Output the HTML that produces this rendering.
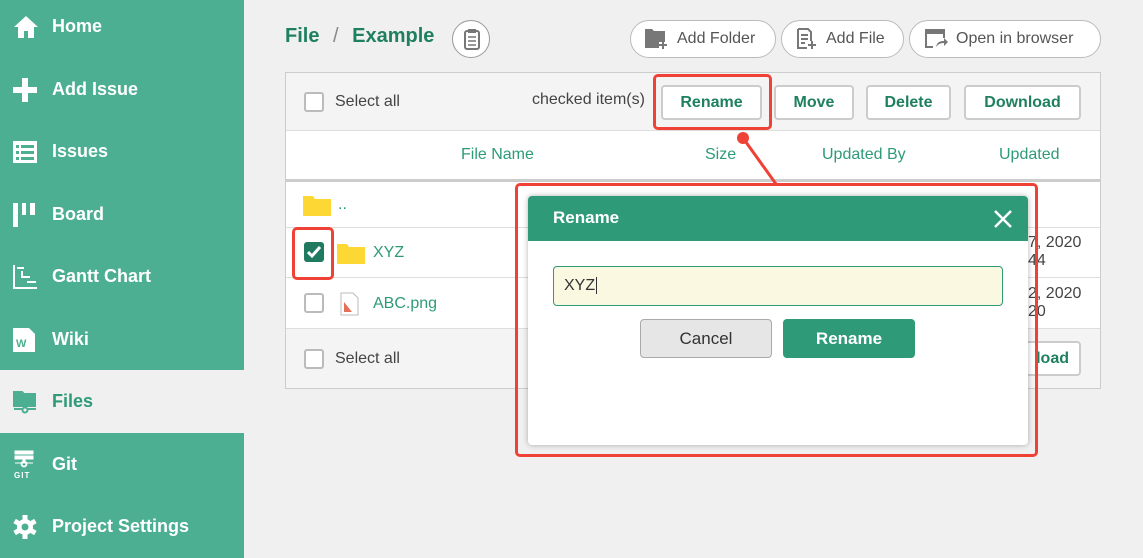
<!DOCTYPE html>
<html><head><meta charset="utf-8"><style>
*{box-sizing:border-box;margin:0;padding:0}
body{width:1143px;height:558px;overflow:hidden;background:#f0f0f0;font-family:"Liberation Sans",sans-serif;position:relative}
.side{position:absolute;left:0;top:0;width:244px;height:558px;background:#4caf91}
.it{position:absolute;left:0;width:244px;height:63px;color:#fff;font-weight:bold;font-size:18px;display:flex;align-items:center}
.it svg{position:absolute;left:13px}
.it span{position:absolute;left:52px}
.it.act{background:#f0f0f0;color:#2e9a78}
.abs{position:absolute}
.pill{position:absolute;top:20px;height:38px;border:1px solid #bbb;border-radius:19px;background:#fff;color:#555;font-size:16px;display:flex;align-items:center;padding-left:14px}
.btn{position:absolute;top:85px;height:35px;border:2px solid #ccc;border-radius:4px;background:#fff;color:#1f8060;font-weight:bold;font-size:16px;display:flex;align-items:center;justify-content:center}
.cb{position:absolute;width:20px;height:20px;border:2px solid #bbb;border-radius:3px;background:#fff}
.g{color:#2e9a78}
.red{position:absolute;border:3px solid #ef4136;border-radius:5px}
</style></head><body>
<div class="side">
<div class="it" style="top:-5px"><svg width="26" height="24" viewBox="0 0 26 24"><path d="M13 1L1 12h4v11h6v-7h4v7h6V12h4z" fill="#fff"/></svg><span>Home</span></div>
<div class="it" style="top:58px"><svg width="24" height="24" viewBox="0 0 24 24"><path d="M9 0h6v9h9v6h-9v9H9v-9H0V9h9z" fill="#fff"/></svg><span>Add Issue</span></div>
<div class="it" style="top:120px"><svg width="24" height="22" viewBox="0 0 24 22"><rect width="24" height="22" fill="#fff"/><path d="M3 4h3v3H3zM8 4h13v3H8zM3 10h3v3H3zM8 10h13v3H8zM3 16h3v3H3zM8 16h13v3H8z" fill="#4caf91"/></svg><span>Issues</span></div>
<div class="it" style="top:183px"><svg width="24" height="24" viewBox="0 0 24 24"><path d="M0 0h5v24H0zM9 0h4v12H9zM17 0h5v12h-5z" fill="#fff"/></svg><span>Board</span></div>
<div class="it" style="top:245px"><svg width="24" height="24" viewBox="0 0 24 24"><path d="M0 0h2v22h22v2H0zM4 2h7v2H4zM8 11h9v2H8zM14 16h9v2h-9zM8 6h2v7H8z" fill="#fff"/></svg><span>Gantt Chart</span></div>
<div class="it" style="top:308px"><svg width="22" height="24" viewBox="0 0 22 24"><path d="M0 0h16l6 6v18H0z" fill="#fff"/><text x="3" y="19" font-size="11" font-weight="bold" fill="#4caf91" font-family="Liberation Sans">W</text></svg><span>Wiki</span></div>
<div class="it act" style="top:370px"><svg width="24" height="24" viewBox="0 0 24 24"><path d="M1 2h8l2 2h11v12H1z M11 16h2v3h-2zM1 19h8M15 19h8" fill="#4caf91" stroke="#4caf91" stroke-width="2"/><circle cx="12" cy="20" r="2.5" fill="#f0f0f0" stroke="#4caf91" stroke-width="2"/></svg><span>Files</span></div>
<div class="it" style="top:433px"><svg width="24" height="30" viewBox="0 0 24 30" style="top:17px"><path d="M2 1h18v3H2zM2 6h18v3H2zM10 9h2v4h-2zM2 13h7M13 13h7" fill="#fff" stroke="#fff" stroke-width="1"/><circle cx="11" cy="14" r="2.5" fill="none" stroke="#fff" stroke-width="1.8"/><text x="1" y="28" font-size="8" fill="#fff" font-family="Liberation Sans" letter-spacing="1">GIT</text></svg><span>Git</span></div>
<div class="it" style="top:495px"><svg width="24" height="24" viewBox="0 0 24 24"><circle cx="12" cy="12" r="8" fill="#fff"/><g fill="#fff"><rect x="9.5" y="0" width="5" height="24"/><rect x="9.5" y="0" width="5" height="24" transform="rotate(60 12 12)"/><rect x="9.5" y="0" width="5" height="24" transform="rotate(120 12 12)"/></g><circle cx="12" cy="12" r="3.5" fill="#4caf91"/></svg><span>Project Settings</span></div>
</div>

<div class="abs" style="left:285px;top:25px;font-size:20px;font-weight:bold;color:#1f8060">File <span style="color:#888;font-weight:normal;margin:0 8px">/</span> Example</div>
<div class="abs" style="left:452px;top:20px;width:38px;height:38px;border:1px solid #999;border-radius:50%;background:#fff"><svg width="38" height="38" viewBox="0 0 38 38"><rect x="12" y="10" width="14" height="18" rx="2" fill="none" stroke="#777" stroke-width="2"/><rect x="15" y="8" width="8" height="4" fill="#777"/><path d="M15 16h8M15 20h8M15 24h8" stroke="#777" stroke-width="1.5"/></svg></div>
<div class="pill" style="left:630px;width:146px"><svg width="24" height="22" viewBox="0 0 24 22" style="margin-right:8px"><path d="M0 1h7l2 2h11v11h-6v6H0z" fill="#777"/><path d="M18 13v8M14 17h8" stroke="#777" stroke-width="2"/></svg>Add Folder</div>
<div class="pill" style="left:781px;width:123px"><svg width="22" height="22" viewBox="0 0 22 22" style="margin-right:8px"><path d="M2 1h10l3 3v9M11 20H2V1" fill="none" stroke="#777" stroke-width="2"/><path d="M5 7h7M5 11h7M5 15h4M16 13v8M12 17h8" stroke="#777" stroke-width="2"/></svg>Add File</div>
<div class="pill" style="left:909px;width:192px"><svg width="24" height="22" viewBox="0 0 24 22" style="margin-right:8px"><path d="M9 19H2V2h18v8" fill="none" stroke="#777" stroke-width="2"/><path d="M2 2h18v4H2z" fill="#777"/><path d="M12 19c1-5 4-6 8-6v-3l4 4-4 4v-3c-3 0-6 1-8 4z" fill="#777"/></svg>Open in browser</div>

<div class="abs" style="left:285px;top:72px;width:816px;height:317px;border:1px solid #ccc;background:#fff">
 <div class="abs" style="left:0;top:0;width:814px;height:58px;background:#f4f4f4;border-bottom:1px solid #ddd"></div>
 <div class="abs" style="left:0;top:106px;width:814px;height:3px;background:#ccc"></div>
 <div class="abs" style="left:0;top:154px;width:814px;height:1px;background:#ddd"></div>
 <div class="abs" style="left:0;top:204px;width:814px;height:1px;background:#ddd"></div>
 <div class="abs" style="left:0;top:255px;width:814px;height:60px;background:#f4f4f4;border-top:1px solid #ddd"></div>
</div>
<div class="cb" style="left:304px;top:92px"></div>
<div class="abs" style="left:335px;top:93px;font-size:16px;color:#444">Select all</div>
<div class="abs" style="left:532px;top:91px;font-size:16px;color:#444">checked item(s)</div>
<div class="btn" style="left:661px;width:101px">Rename</div>
<div class="btn" style="left:774px;width:80px">Move</div>
<div class="btn" style="left:866px;width:85px">Delete</div>
<div class="btn" style="left:964px;width:117px">Download</div>
<div class="red" style="left:653px;top:74px;width:119px;height:56px"></div>
<div class="abs g" style="left:461px;top:146px;font-size:16px">File Name</div>
<div class="abs g" style="left:705px;top:146px;font-size:16px">Size</div>
<div class="abs g" style="left:822px;top:146px;font-size:16px">Updated By</div>
<div class="abs g" style="left:999px;top:146px;font-size:16px">Updated</div>
<svg class="abs" style="left:303px;top:194px" width="28" height="22"><path d="M0 2h10l2 3h16v17H0z" fill="#fdd835"/></svg>
<div class="abs g" style="left:338px;top:196px;font-size:16px">..</div>
<div class="abs" style="left:304px;top:242px;width:20px;height:20px;background:#1f7a60;border-radius:3px"><svg width="20" height="20"><path d="M4 10l4 4 8-9" fill="none" stroke="#fff" stroke-width="3"/></svg></div>
<div class="red" style="left:292px;top:227px;width:42px;height:53px"></div>
<svg class="abs" style="left:337px;top:243px" width="28" height="21"><path d="M0 1h10l2 3h16v17H0z" fill="#fdd835"/></svg>
<div class="abs g" style="left:373px;top:244px;font-size:16px">XYZ</div>
<div class="cb" style="left:304px;top:293px"></div>
<svg class="abs" style="left:340px;top:292px" width="20" height="24"><path d="M1 1h12l5 5v17H1z" fill="#fff" stroke="#bbb"/><path d="M4 10l8 10H4z" fill="#e57058"/></svg>
<div class="abs g" style="left:373px;top:295px;font-size:16px">ABC.png</div>
<div class="abs" style="left:1028px;top:234px;font-size:16px;color:#444">7, 2020<br>44</div>
<div class="abs" style="left:1028px;top:285px;font-size:16px;color:#444">2, 2020<br>20</div>
<div class="cb" style="left:304px;top:349px"></div>
<div class="abs" style="left:335px;top:350px;font-size:16px;color:#444">Select all</div>
<div class="btn" style="left:1000px;top:341px;width:81px;justify-content:flex-end;padding-right:10px">load</div>

<svg class="abs" style="left:735px;top:130px" width="50" height="60"><circle cx="8" cy="8" r="6" fill="#ef4136"/><path d="M8 8L41 54" stroke="#ef4136" stroke-width="3"/></svg>
<div class="red" style="left:515px;top:183px;width:523px;height:274px"></div>
<div class="abs" style="left:528px;top:196px;width:500px;height:249px;background:#fff;border-radius:4px;box-shadow:0 0 6px rgba(0,0,0,.3);overflow:hidden">
 <div style="height:45px;background:#2e9a78;color:#fff;font-weight:bold;font-size:17px;padding:12px 0 0 25px">Rename</div>
 <svg class="abs" style="left:465px;top:13px" width="20" height="20"><path d="M2 2l16 16M18 2L2 18" stroke="#fff" stroke-width="2.5"/></svg>
 <div class="abs" style="left:25px;top:70px;width:450px;height:40px;background:#faf8e1;border:1px solid #2e9a78;border-radius:4px;font-size:16px;color:#333;padding:10px 0 0 10px">XYZ<span style="border-left:1px solid #333;margin-left:1px"></span></div>
 <div class="abs" style="left:112px;top:123px;width:132px;height:39px;background:#e6e6e6;border:1px solid #aaa;border-radius:4px;font-size:17px;color:#333;display:flex;align-items:center;justify-content:center">Cancel</div>
 <div class="abs" style="left:255px;top:123px;width:132px;height:39px;background:#2e9a78;border-radius:4px;font-size:17px;font-weight:bold;color:#fff;display:flex;align-items:center;justify-content:center">Rename</div>
</div>
</body></html>
